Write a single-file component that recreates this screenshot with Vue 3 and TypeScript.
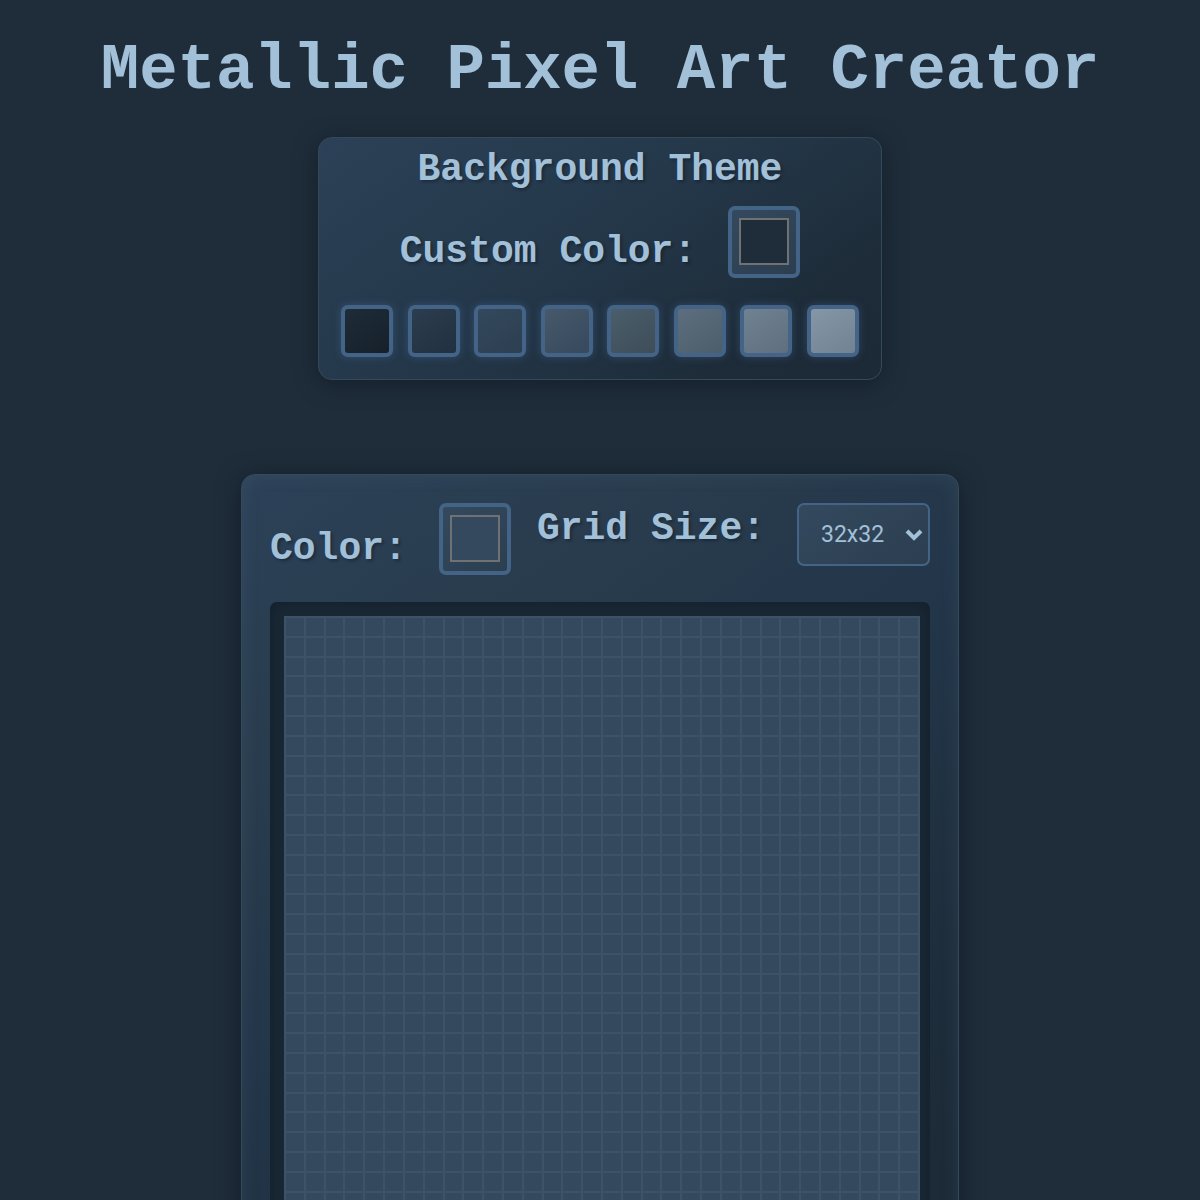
<script setup lang="ts">
import { computed, ref } from 'vue'

interface Theme {
  name: string
  from: string
  to: string
}

const themes: Theme[] = [
  { name: 'Midnight', from: '#1f2d3a', to: '#151f29' },
  { name: 'Navy steel', from: '#2c3e50', to: '#212f3f' },
  { name: 'Blue steel', from: '#34495e', to: '#2c3e50' },
  { name: 'Slate', from: '#485a6b', to: '#35485c' },
  { name: 'Gunmetal', from: '#4c5f6c', to: '#3c4c57' },
  { name: 'Iron', from: '#5f6f80', to: '#4a5c69' },
  { name: 'Pewter', from: '#728394', to: '#5d6d7e' },
  { name: 'Silver', from: '#8798aa', to: '#6f8090' },
]

const background = ref('#1f2d3a')
const color = ref('#34495e')
const size = ref(32)
const painted = ref<Record<number, string>>({})
const cells = computed(() => size.value * size.value)

function paint(index: number) {
  painted.value[index] = color.value
}
</script>

<template>
  <div class="page" :style="{ backgroundColor: background }">
    <h1>Metallic Pixel Art Creator</h1>

    <section class="theme-panel">
      <h2>Background Theme</h2>
      <div class="field custom">
        <label for="background">Custom Color:</label>
        <input id="background" v-model="background" type="color" />
      </div>
      <div class="swatches">
        <button
          v-for="theme in themes"
          :key="theme.name"
          type="button"
          class="swatch"
          :aria-label="theme.name"
          :style="{ backgroundImage: `linear-gradient(145deg, ${theme.from}, ${theme.to})` }"
          @click="background = theme.from"
        ></button>
      </div>
    </section>

    <main class="editor">
      <div class="controls">
        <div class="field">
          <label for="color">Color:</label>
          <input id="color" v-model="color" type="color" />
        </div>
        <div class="field top">
          <label for="size">Grid Size:</label>
          <span class="select">
            <select id="size" v-model.number="size" @change="painted = {}">
              <option :value="16">16x16</option>
              <option :value="32">32x32</option>
              <option :value="64">64x64</option>
            </select>
            <svg viewBox="0 0 18 12" width="18" height="12" aria-hidden="true">
              <path d="M2 2l7 7 7-7" fill="none" stroke="#a3c0d9" stroke-width="4" />
            </svg>
          </span>
        </div>
      </div>

      <div class="frame">
        <div class="grid" :style="{ gridTemplateColumns: `repeat(${size}, 1fr)` }">
          <div
            v-for="n in cells"
            :key="n"
            class="cell"
            :style="{ backgroundColor: painted[n] }"
            @click="paint(n)"
          ></div>
        </div>
      </div>
    </main>
  </div>
</template>

<style>
body {
  margin: 0;
  background: #1f2d3a;
}
</style>

<style scoped>
.page {
  display: flex;
  flex-direction: column;
  align-items: center;
  min-height: 100vh;
  padding: 35px 36px 56px;
  box-sizing: border-box;
  color: #a3c0d9;
  font-family: 'Liberation Mono', monospace;
}

h1 {
  margin: 0 0 30px;
  font-size: 64px;
  line-height: 72px;
  font-weight: 700;
  text-align: center;
}

.theme-panel {
  width: 100%;
  max-width: 564px;
  padding: 10px 22px 22px;
  box-sizing: border-box;
  border: 1px solid #34495a;
  border-radius: 14px;
  background: linear-gradient(145deg, #2c4157 0%, #24384a 45%, #1e2c39 80%, #1c2936 100%);
  box-shadow: 0 4px 22px rgba(10, 18, 28, 0.5);
}

h2 {
  margin: 0 0 14px;
  font-size: 38px;
  line-height: 44px;
  font-weight: 700;
  text-align: center;
  text-shadow: 2px 2px 3px rgba(10, 18, 28, 0.4);
}

.field {
  display: flex;
  align-items: flex-end;
  gap: 32px;
}

.field.top {
  align-items: flex-start;
}

.custom {
  justify-content: center;
  margin-bottom: 27px;
}

label {
  font-size: 38px;
  line-height: 52px;
  font-weight: 700;
  white-space: nowrap;
  text-shadow: 2px 2px 3px rgba(10, 18, 28, 0.4);
}

input[type='color'] {
  appearance: none;
  flex: none;
  width: 72px;
  height: 72px;
  padding: 8px 7px 9px;
  box-sizing: border-box;
  border: 4px solid #436487;
  border-radius: 7px;
  background: linear-gradient(145deg, #34495e, #2c3e50);
  cursor: pointer;
}

input[type='color']::-webkit-color-swatch-wrapper {
  padding: 0;
}

input[type='color']::-webkit-color-swatch {
  border: 2px solid #6f7173;
  border-radius: 0;
}

.swatches {
  display: flex;
  justify-content: space-between;
}

.swatch {
  width: 52px;
  height: 52px;
  padding: 0;
  border: 4px solid #436487;
  border-radius: 7px;
  background-origin: border-box;
  box-shadow: 0 0 9px rgba(74, 111, 165, 0.4);
  cursor: pointer;
}

.editor {
  width: 100%;
  max-width: 718px;
  margin-top: 94px;
  padding: 28px;
  box-sizing: border-box;
  border: 1px solid #34495a;
  border-radius: 14px;
  background: linear-gradient(145deg, #2c4158 0%, #293c4d 25%, #23364a 45%, #1e2d3b 75%, #1c2936 100%);
  box-shadow:
    0 4px 24px rgba(10, 18, 28, 0.6),
    inset 0 0 18px rgba(110, 140, 165, 0.15);
}

.controls {
  display: flex;
  justify-content: space-between;
  align-items: flex-start;
  margin-bottom: 27px;
}

.select {
  position: relative;
  display: flex;
}

select {
  appearance: none;
  width: 133px;
  height: 63px;
  padding: 0 22px;
  box-sizing: border-box;
  border: 2px solid #436487;
  border-radius: 7px;
  background: linear-gradient(145deg, #34495e, #2c3e50);
  color: #a3c0d9;
  font-family: Roboto, sans-serif;
  font-size: 23px;
  cursor: pointer;
}

.select svg {
  position: absolute;
  top: 26px;
  right: 7px;
  pointer-events: none;
}

.frame {
  padding: 14px 10px 14px 14px;
  border-radius: 7px;
  background: #1a2835;
  box-shadow: inset 0 0 14px rgba(10, 20, 32, 0.5);
}

.grid {
  display: grid;
  aspect-ratio: 1;
  box-sizing: border-box;
  border: solid #3c5267;
  border-width: 2px 0 0 2px;
  background: #34495e;
}

.cell {
  border: solid #3c5267;
  border-width: 0 2px 2px 0;
  cursor: crosshair;
}
</style>
